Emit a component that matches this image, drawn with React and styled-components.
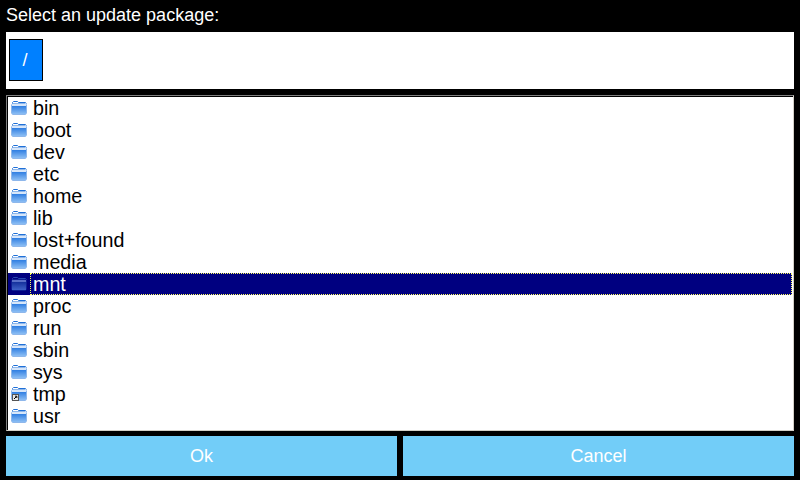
import React from "react";
import styled, { createGlobalStyle } from "styled-components";

const Global = createGlobalStyle`
  html, body { margin: 0; padding: 0; background: #000; }
  body { font-family: "Liberation Sans", Arial, sans-serif; }
`;

const Screen = styled.div`
  width: 800px;
  height: 480px;
  box-sizing: border-box;
  padding: 0 6px 4px;
  background: #000;
  display: flex;
  flex-direction: column;
  overflow: hidden;
`;

const Title = styled.div`
  height: 32px;
  line-height: 31px;
  color: #fff;
  font-size: 18px;
`;

const PathBar = styled.div`
  height: 57px;
  box-sizing: border-box;
  background: #fff;
  padding: 7px 3px 8px;
  display: flex;
  margin-bottom: 6px;
`;

const Crumb = styled.div`
  width: 34px;
  height: 42px;
  box-sizing: border-box;
  background: #0080ff;
  border: 1px solid #000;
  color: #fff;
  font-size: 18px;
  padding-right: 2px;
  display: flex;
  align-items: center;
  justify-content: center;
`;

const List = styled.div`
  height: 336px;
  box-sizing: border-box;
  background: #fff;
  border: 1px solid;
  border-color: #808080 #d4d0c8 #d4d0c8 #808080;
  box-shadow: inset 1px 1px 0 #000;
  padding: 1px;
  overflow: hidden;
  display: flex;
  flex-direction: column;
`;

const Row = styled.div`
  height: 22px;
  flex: none;
  display: flex;
  align-items: center;
  box-sizing: border-box;
  padding-left: 3px;
  font-size: 19.7px;
  color: #000;
  background: ${(p) => (p.$selected ? "#000080" : "transparent")};
`;

const Name = styled.span`
  flex: 1;
  align-self: stretch;
  box-sizing: border-box;
  margin-left: 3px;
  padding-left: 3px;
  line-height: 22px;
  color: ${(p) => (p.$selected ? "#fff" : "#000")};
  ${(p) => (p.$selected ? "outline: 1px dotted #ffff60; outline-offset: -1px;" : "")}
`;

const Buttons = styled.div`
  display: flex;
  gap: 6px;
  margin-top: 5px;
`;

const Button = styled.button`
  flex: 1;
  height: 40px;
  border: 0;
  padding: 0;
  background: #72cdf8;
  color: #fff;
  font-family: inherit;
  font-size: 18px;
`;

function Folder({ selected, link, id }) {
  return (
    <svg width="16" height="14" viewBox="0 0 16 14" style={{ flex: "none" }}>
      <defs>
        <linearGradient id={id} x1="0" y1="0" x2="0" y2="1">
          <stop offset="0" stopColor={selected ? "#14309c" : "#2f7ee2"} />
          <stop offset="1" stopColor={selected ? "#3f62c8" : "#8cbef4"} />
        </linearGradient>
      </defs>
      <path d="M1.5 2.5 V1.5 L2.5 .5 H6.5 L7.5 1.5 H14.5 L15.5 2.5" fill="none" stroke={selected ? "#2848b0" : "#1f70d8"} />
      <rect x=".5" y="2.5" width="15" height="11" rx="1.5" fill={selected ? "#1c3ca4" : "#1f70d8"} />
      <rect x="1" y="3" width="14" height="2" fill={selected ? "#5a70c8" : "#d6e6fa"} />
      <rect x="1" y="5" width="14" height="8" fill={`url(#${id})`} />
      {link && (
        <g>
          <rect x="1.5" y="7.5" width="6" height="6" fill="#e8e8e8" stroke="#555" />
          <path d="M3 12 L5.5 9.5 M4 9.2 H5.8 V11" stroke="#000" fill="none" />
        </g>
      )}
    </svg>
  );
}

const entries = ["bin","boot","dev","etc","home","lib","lost+found","media","mnt","proc","run","sbin","sys","tmp","usr"];

export default function App() {
  return (
    <Screen>
      <Global />
      <Title>Select an update package:</Title>
      <PathBar><Crumb>/</Crumb></PathBar>
      <List>
        {entries.map((e) => (
          <Row key={e} $selected={e === "mnt"}>
            <Folder id={`f-${e.replace("+", "")}`} selected={e === "mnt"} link={e === "tmp"} />
            <Name $selected={e === "mnt"}>{e}</Name>
          </Row>
        ))}
      </List>
      <Buttons>
        <Button>Ok</Button>
        <Button>Cancel</Button>
      </Buttons>
    </Screen>
  );
}
